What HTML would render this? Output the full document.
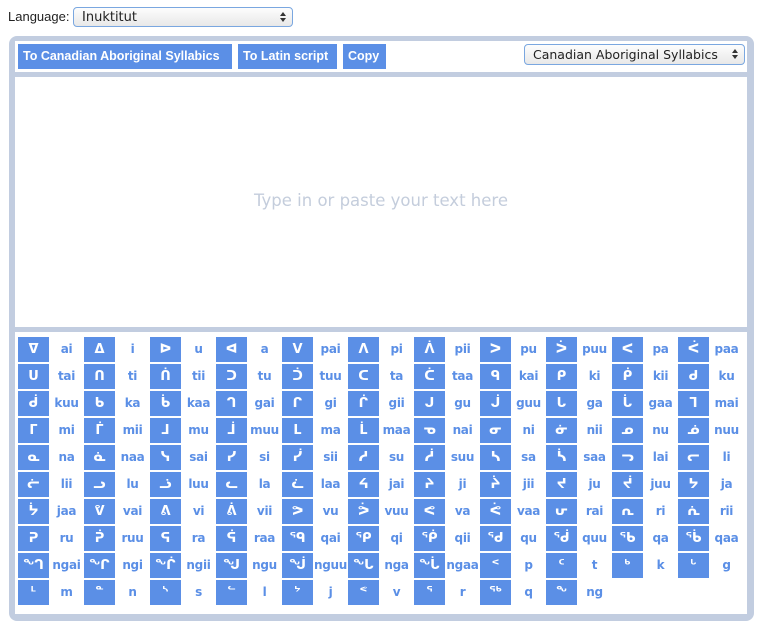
<!DOCTYPE html>
<html><head><meta charset="utf-8"><style>
*{box-sizing:border-box}
body{margin:0;width:762px;height:628px;background:#fff;font-family:"Liberation Sans",sans-serif;position:relative;overflow:hidden}
.lang{position:absolute;left:8px;top:9px;font-size:13px;color:#222}
.sel{position:absolute;border:1px solid #7aa7e0;border-radius:4px;background:linear-gradient(#fdfdfd,#e8e8e8);font-family:"DejaVu Sans",sans-serif;font-size:13px;color:#222;padding:0 8px;line-height:19px;white-space:nowrap}
.sel:after{content:"";position:absolute;right:6px;top:4px;width:0;height:0;border-left:3px solid transparent;border-right:3px solid transparent;border-bottom:4px solid #333}
.sel:before{content:"";position:absolute;right:6px;top:10px;width:0;height:0;border-left:3px solid transparent;border-right:3px solid transparent;border-top:4px solid #333}
.panel{position:absolute;left:9px;top:36px;width:745px;height:585px;background:#c2cde0;border-radius:8px}
.w{position:absolute;background:#fff}
.tb{position:absolute;top:44px;height:25px;background:#5b8fe6;color:#fff;font-weight:bold;font-size:12.5px;line-height:25px;padding:0 5px;white-space:nowrap;overflow:hidden}
.ph{position:absolute;left:15px;top:191px;width:732px;text-align:center;color:#c4cddc;font-size:16.5px;font-family:"DejaVu Sans",sans-serif}
.g{position:absolute;left:18px;top:337px;width:730px}
.r{display:flex;height:27px}
.p{display:flex;width:66px}
.b{width:31px;height:25px;background:#5b8fe6;color:#fff;font-family:"DejaVu Sans",sans-serif;font-weight:bold;font-size:13px;text-align:center;line-height:25px}
.l{width:35px;text-align:center;color:#5b8fe6;font-weight:bold;font-size:12px;line-height:25px;font-family:"DejaVu Sans",sans-serif;letter-spacing:-0.3px;white-space:nowrap}
</style></head><body>
<div class="lang">Language:</div>
<div class="sel" style="left:73px;top:7px;width:220px;height:20px">Inuktitut</div>
<div class="panel"></div>
<div class="w" style="left:15px;top:41px;width:732px;height:31px"></div>
<div class="w" style="left:15px;top:77px;width:732px;height:250px"></div>
<div class="w" style="left:15px;top:332px;width:732px;height:282px"></div>
<div class="tb" style="left:18px;width:214px">To Canadian Aboriginal Syllabics</div>
<div class="tb" style="left:238px;width:99px">To Latin script</div>
<div class="tb" style="left:343px;width:43px">Copy</div>
<div class="sel" style="left:524px;top:44px;width:221px;height:21px;font-size:12.5px">Canadian Aboriginal Syllabics</div>
<div class="ph">Type in or paste your text here</div>
<div class="g">
<div class="r"><div class="p"><div class="b">ᐁ</div><div class="l">ai</div></div><div class="p"><div class="b">ᐃ</div><div class="l">i</div></div><div class="p"><div class="b">ᐅ</div><div class="l">u</div></div><div class="p"><div class="b">ᐊ</div><div class="l">a</div></div><div class="p"><div class="b">ᐯ</div><div class="l">pai</div></div><div class="p"><div class="b">ᐱ</div><div class="l">pi</div></div><div class="p"><div class="b">ᐲ</div><div class="l">pii</div></div><div class="p"><div class="b">ᐳ</div><div class="l">pu</div></div><div class="p"><div class="b">ᐴ</div><div class="l">puu</div></div><div class="p"><div class="b">ᐸ</div><div class="l">pa</div></div><div class="p"><div class="b">ᐹ</div><div class="l">paa</div></div></div>
<div class="r"><div class="p"><div class="b">ᑌ</div><div class="l">tai</div></div><div class="p"><div class="b">ᑎ</div><div class="l">ti</div></div><div class="p"><div class="b">ᑏ</div><div class="l">tii</div></div><div class="p"><div class="b">ᑐ</div><div class="l">tu</div></div><div class="p"><div class="b">ᑑ</div><div class="l">tuu</div></div><div class="p"><div class="b">ᑕ</div><div class="l">ta</div></div><div class="p"><div class="b">ᑖ</div><div class="l">taa</div></div><div class="p"><div class="b">ᑫ</div><div class="l">kai</div></div><div class="p"><div class="b">ᑭ</div><div class="l">ki</div></div><div class="p"><div class="b">ᑮ</div><div class="l">kii</div></div><div class="p"><div class="b">ᑯ</div><div class="l">ku</div></div></div>
<div class="r"><div class="p"><div class="b">ᑰ</div><div class="l">kuu</div></div><div class="p"><div class="b">ᑲ</div><div class="l">ka</div></div><div class="p"><div class="b">ᑳ</div><div class="l">kaa</div></div><div class="p"><div class="b">ᒉ</div><div class="l">gai</div></div><div class="p"><div class="b">ᒋ</div><div class="l">gi</div></div><div class="p"><div class="b">ᒌ</div><div class="l">gii</div></div><div class="p"><div class="b">ᒍ</div><div class="l">gu</div></div><div class="p"><div class="b">ᒎ</div><div class="l">guu</div></div><div class="p"><div class="b">ᒐ</div><div class="l">ga</div></div><div class="p"><div class="b">ᒑ</div><div class="l">gaa</div></div><div class="p"><div class="b">ᒣ</div><div class="l">mai</div></div></div>
<div class="r"><div class="p"><div class="b">ᒥ</div><div class="l">mi</div></div><div class="p"><div class="b">ᒦ</div><div class="l">mii</div></div><div class="p"><div class="b">ᒧ</div><div class="l">mu</div></div><div class="p"><div class="b">ᒨ</div><div class="l">muu</div></div><div class="p"><div class="b">ᒪ</div><div class="l">ma</div></div><div class="p"><div class="b">ᒫ</div><div class="l">maa</div></div><div class="p"><div class="b">ᓀ</div><div class="l">nai</div></div><div class="p"><div class="b">ᓂ</div><div class="l">ni</div></div><div class="p"><div class="b">ᓃ</div><div class="l">nii</div></div><div class="p"><div class="b">ᓄ</div><div class="l">nu</div></div><div class="p"><div class="b">ᓅ</div><div class="l">nuu</div></div></div>
<div class="r"><div class="p"><div class="b">ᓇ</div><div class="l">na</div></div><div class="p"><div class="b">ᓈ</div><div class="l">naa</div></div><div class="p"><div class="b">ᓭ</div><div class="l">sai</div></div><div class="p"><div class="b">ᓯ</div><div class="l">si</div></div><div class="p"><div class="b">ᓰ</div><div class="l">sii</div></div><div class="p"><div class="b">ᓱ</div><div class="l">su</div></div><div class="p"><div class="b">ᓲ</div><div class="l">suu</div></div><div class="p"><div class="b">ᓴ</div><div class="l">sa</div></div><div class="p"><div class="b">ᓵ</div><div class="l">saa</div></div><div class="p"><div class="b">ᓓ</div><div class="l">lai</div></div><div class="p"><div class="b">ᓕ</div><div class="l">li</div></div></div>
<div class="r"><div class="p"><div class="b">ᓖ</div><div class="l">lii</div></div><div class="p"><div class="b">ᓗ</div><div class="l">lu</div></div><div class="p"><div class="b">ᓘ</div><div class="l">luu</div></div><div class="p"><div class="b">ᓚ</div><div class="l">la</div></div><div class="p"><div class="b">ᓛ</div><div class="l">laa</div></div><div class="p"><div class="b">ᔦ</div><div class="l">jai</div></div><div class="p"><div class="b">ᔨ</div><div class="l">ji</div></div><div class="p"><div class="b">ᔩ</div><div class="l">jii</div></div><div class="p"><div class="b">ᔪ</div><div class="l">ju</div></div><div class="p"><div class="b">ᔫ</div><div class="l">juu</div></div><div class="p"><div class="b">ᔭ</div><div class="l">ja</div></div></div>
<div class="r"><div class="p"><div class="b">ᔮ</div><div class="l">jaa</div></div><div class="p"><div class="b">ᕓ</div><div class="l">vai</div></div><div class="p"><div class="b">ᕕ</div><div class="l">vi</div></div><div class="p"><div class="b">ᕖ</div><div class="l">vii</div></div><div class="p"><div class="b">ᕗ</div><div class="l">vu</div></div><div class="p"><div class="b">ᕘ</div><div class="l">vuu</div></div><div class="p"><div class="b">ᕙ</div><div class="l">va</div></div><div class="p"><div class="b">ᕚ</div><div class="l">vaa</div></div><div class="p"><div class="b">ᕂ</div><div class="l">rai</div></div><div class="p"><div class="b">ᕆ</div><div class="l">ri</div></div><div class="p"><div class="b">ᕇ</div><div class="l">rii</div></div></div>
<div class="r"><div class="p"><div class="b">ᕈ</div><div class="l">ru</div></div><div class="p"><div class="b">ᕉ</div><div class="l">ruu</div></div><div class="p"><div class="b">ᕋ</div><div class="l">ra</div></div><div class="p"><div class="b">ᕌ</div><div class="l">raa</div></div><div class="p"><div class="b">ᙯ</div><div class="l">qai</div></div><div class="p"><div class="b">ᕿ</div><div class="l">qi</div></div><div class="p"><div class="b">ᖀ</div><div class="l">qii</div></div><div class="p"><div class="b">ᖁ</div><div class="l">qu</div></div><div class="p"><div class="b">ᖂ</div><div class="l">quu</div></div><div class="p"><div class="b">ᖃ</div><div class="l">qa</div></div><div class="p"><div class="b">ᖄ</div><div class="l">qaa</div></div></div>
<div class="r"><div class="p"><div class="b">ᙰ</div><div class="l">ngai</div></div><div class="p"><div class="b">ᖏ</div><div class="l">ngi</div></div><div class="p"><div class="b">ᖐ</div><div class="l">ngii</div></div><div class="p"><div class="b">ᖑ</div><div class="l">ngu</div></div><div class="p"><div class="b">ᖒ</div><div class="l">nguu</div></div><div class="p"><div class="b">ᖓ</div><div class="l">nga</div></div><div class="p"><div class="b">ᖔ</div><div class="l">ngaa</div></div><div class="p"><div class="b">ᑉ</div><div class="l">p</div></div><div class="p"><div class="b">ᑦ</div><div class="l">t</div></div><div class="p"><div class="b">ᒃ</div><div class="l">k</div></div><div class="p"><div class="b">ᒡ</div><div class="l">g</div></div></div>
<div class="r"><div class="p"><div class="b">ᒻ</div><div class="l">m</div></div><div class="p"><div class="b">ᓐ</div><div class="l">n</div></div><div class="p"><div class="b">ᔅ</div><div class="l">s</div></div><div class="p"><div class="b">ᓪ</div><div class="l">l</div></div><div class="p"><div class="b">ᔾ</div><div class="l">j</div></div><div class="p"><div class="b">ᕝ</div><div class="l">v</div></div><div class="p"><div class="b">ᕐ</div><div class="l">r</div></div><div class="p"><div class="b">ᖅ</div><div class="l">q</div></div><div class="p"><div class="b">ᖕ</div><div class="l">ng</div></div></div>
</div>
</body></html>
